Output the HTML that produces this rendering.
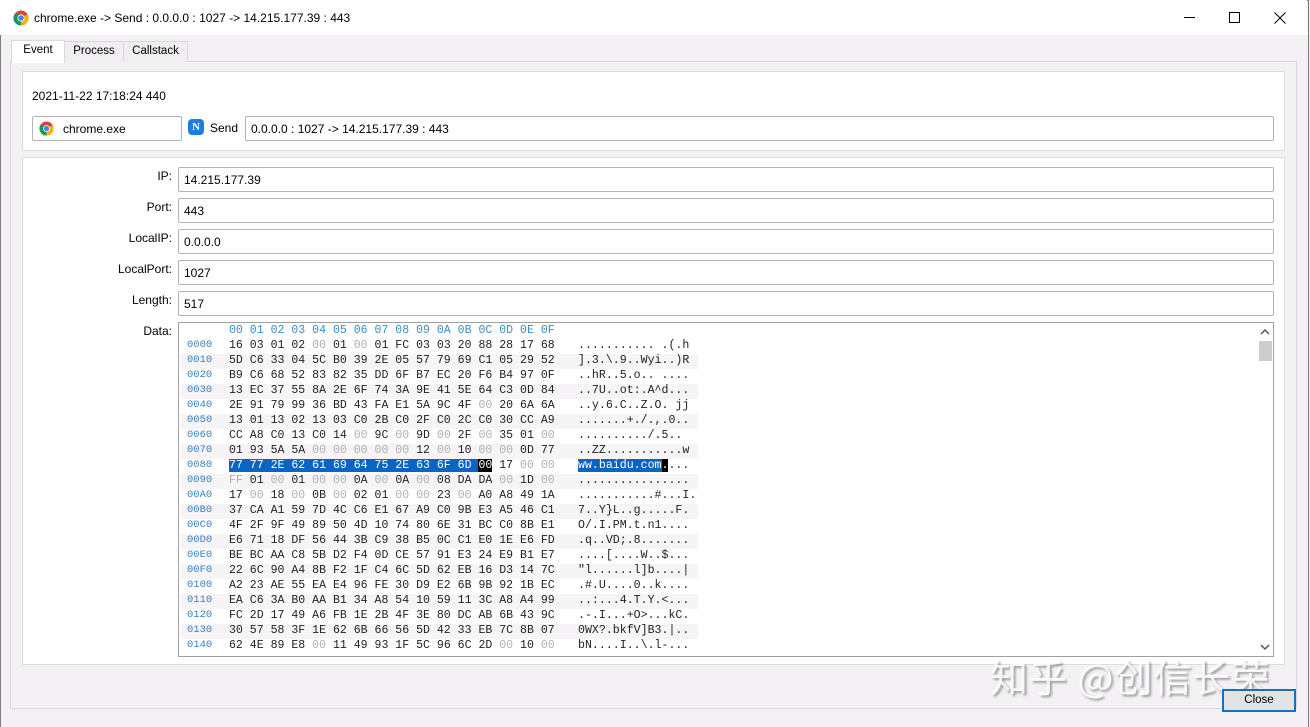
<!DOCTYPE html>
<html><head><meta charset="utf-8"><style>
*{margin:0;padding:0;box-sizing:border-box}
body{width:1310px;height:727px;background:#f3f1f4;font-family:"Liberation Sans","Noto Sans CJK SC",sans-serif;font-size:12px;color:#000;position:relative;overflow:hidden}
.win{position:absolute;left:0;top:0;width:1309px;height:727px;border:1px solid #7a7a7a;border-bottom:none}
.title{position:absolute;left:0;top:0;width:1307px;height:35px;background:#fff}
.abs{position:absolute}
.tab{position:absolute;top:41px;height:21px;border:1px solid #d9d9d9;border-bottom:none;background:#f0eef1;padding:3px 0 0;text-align:center;font-size:11.5px}
.box{position:absolute;border:1px solid #dcdcdc;background:#fff}
.in{position:absolute;border:1px solid #b4b4b4;border-radius:2px;background:#fff;height:25px;padding:5px 0 0 5px;font-size:12px}
.lbl{position:absolute;width:172px;text-align:right;font-size:12px}
.hex{position:absolute;left:180px;width:518px;height:15px;font-family:"Liberation Mono",monospace;white-space:pre}
.hex.alt{background:#f6f4f7}
.hex .o{position:absolute;left:7px;top:0px;font-size:10.5px;color:#3a7fc0}
.hex .b{position:absolute;left:49px;top:0px;font-size:11.55px;color:#222}
.hex .a{position:absolute;left:398px;top:0px;font-size:11.6px;color:#222}
i{font-style:normal;color:#b0b0b0}
.hl{background:#0a64c4;color:#fff}
.hk{background:#000;color:#fff}
</style></head><body>
<div class="win"></div>
<div class="title"></div>
<svg class="abs" style="left:13px;top:10px" width="16" height="16" viewBox="0 0 16 16"><circle cx="8" cy="8" r="7.5" fill="#db4437"/><path d="M8 8 L1.5 11.7 A7.5 7.5 0 0 0 8 15.5 Z" fill="#0f9d58"/><path d="M8 8 L1.5 11.7 A7.5 7.5 0 0 1 1.5 4.3 L8 4.3Z" fill="#0f9d58"/><path d="M8 8 L14.5 4.3 A7.5 7.5 0 0 1 8 15.5 Z" fill="#f4b400"/><circle cx="8" cy="8" r="3.6" fill="#fff"/><circle cx="8" cy="8" r="2.8" fill="#4285f4"/></svg>
<div class="abs" style="left:34px;top:11px;font-size:12px">chrome.exe -&gt; Send : 0.0.0.0 : 1027 -&gt; 14.215.177.39 : 443</div>
<div class="abs" style="left:1184px;top:17px;width:11px;height:1px;background:#000"></div>
<div class="abs" style="left:1229px;top:12px;width:11px;height:11px;border:1px solid #000"></div>
<svg class="abs" style="left:1274px;top:12px" width="12" height="12"><path d="M0.5 0.5L11.5 11.5M11.5 0.5L0.5 11.5" stroke="#000" stroke-width="1"/></svg>

<div class="abs" style="left:10px;top:61px;width:1287px;height:648px;border:1px solid #d9d9d9;background:#f3f1f4"></div>
<div class="tab" style="left:11px;top:40px;width:54px;height:23px;background:#fff;z-index:2">Event</div>
<div class="tab" style="left:64px;width:60px">Process</div>
<div class="tab" style="left:123px;width:65px">Callstack</div>

<div class="box" style="left:22px;top:71px;width:1263px;height:80px"></div>
<div class="abs" style="left:32px;top:89px;font-size:12px">2021-11-22 17:18:24 440</div>
<div class="in" style="left:32px;top:116px;width:150px;height:25px;padding-left:30px">chrome.exe</div>
<svg class="abs" style="left:39px;top:121px" width="15" height="15" viewBox="0 0 16 16"><circle cx="8" cy="8" r="7.5" fill="#db4437"/><path d="M8 8 L1.5 11.7 A7.5 7.5 0 0 0 8 15.5 Z" fill="#0f9d58"/><path d="M8 8 L1.5 11.7 A7.5 7.5 0 0 1 1.5 4.3 L8 4.3Z" fill="#0f9d58"/><path d="M8 8 L14.5 4.3 A7.5 7.5 0 0 1 8 15.5 Z" fill="#f4b400"/><circle cx="8" cy="8" r="3.6" fill="#fff"/><circle cx="8" cy="8" r="2.8" fill="#4285f4"/></svg>
<div class="abs" style="left:188px;top:119px;width:16px;height:16px;background:#1a7fe0;border-radius:4px;color:#fff;font-family:'Liberation Serif',serif;font-weight:bold;font-size:11px;text-align:center;line-height:16px">N</div>
<div class="abs" style="left:210px;top:121px">Send</div>
<div class="in" style="left:245px;top:116px;width:1029px">0.0.0.0 : 1027 -&gt; 14.215.177.39 : 443</div>

<div class="box" style="left:22px;top:157px;width:1263px;height:508px"></div>
<div class="lbl" style="left:0;top:169px">IP:</div><div class="in" style="left:178px;top:167px;width:1096px">14.215.177.39</div>
<div class="lbl" style="left:0;top:200px">Port:</div><div class="in" style="left:178px;top:198px;width:1096px">443</div>
<div class="lbl" style="left:0;top:231px">LocalIP:</div><div class="in" style="left:178px;top:229px;width:1096px">0.0.0.0</div>
<div class="lbl" style="left:0;top:262px">LocalPort:</div><div class="in" style="left:178px;top:260px;width:1096px">1027</div>
<div class="lbl" style="left:0;top:293px">Length:</div><div class="in" style="left:178px;top:291px;width:1096px">517</div>
<div class="lbl" style="left:0;top:324px">Data:</div>
<div class="abs" style="left:178px;top:322px;width:1096px;height:335px;border:1px solid #a0a0a0;background:#fff;overflow:hidden">
<div class="abs" style="left:1078px;top:0;width:17px;height:333px;background:#fff"></div>
<div class="abs" style="left:1080px;top:18px;width:13px;height:20px;background:#cdcdcd"></div>
<svg class="abs" style="left:1081px;top:5px" width="10" height="8"><path d="M1 6L5 2L9 6" stroke="#555" stroke-width="1.5" fill="none"/></svg>
<svg class="abs" style="left:1081px;top:320px" width="10" height="8"><path d="M1 2L5 6L9 2" stroke="#555" stroke-width="1.5" fill="none"/></svg>
</div>
<div style="position:absolute;left:0;top:2px">
<div class="hex" style="top:322px"><span class="b" style="color:#3a8cc8">00 01 02 03 04 05 06 07 08 09 0A 0B 0C 0D 0E 0F</span></div>
<div class="hex" style="top:337px"><span class="o">0000</span><span class="b">16 03 01 02 <i>00</i> 01 <i>00</i> 01 FC 03 03 20 88 28 17 68</span><span class="a">........... .(.h</span></div>
<div class="hex alt" style="top:352px"><span class="o">0010</span><span class="b">5D C6 33 04 5C B0 39 2E 05 57 79 69 C1 05 29 52</span><span class="a">].3.\.9..Wyi..)R</span></div>
<div class="hex" style="top:367px"><span class="o">0020</span><span class="b">B9 C6 68 52 83 82 35 DD 6F B7 EC 20 F6 B4 97 0F</span><span class="a">..hR..5.o.. ....</span></div>
<div class="hex alt" style="top:382px"><span class="o">0030</span><span class="b">13 EC 37 55 8A 2E 6F 74 3A 9E 41 5E 64 C3 0D 84</span><span class="a">..7U..ot:.A^d...</span></div>
<div class="hex" style="top:397px"><span class="o">0040</span><span class="b">2E 91 79 99 36 BD 43 FA E1 5A 9C 4F <i>00</i> 20 6A 6A</span><span class="a">..y.6.C..Z.O. jj</span></div>
<div class="hex alt" style="top:412px"><span class="o">0050</span><span class="b">13 01 13 02 13 03 C0 2B C0 2F C0 2C C0 30 CC A9</span><span class="a">.......+./.,.0..</span></div>
<div class="hex" style="top:427px"><span class="o">0060</span><span class="b">CC A8 C0 13 C0 14 <i>00</i> 9C <i>00</i> 9D <i>00</i> 2F <i>00</i> 35 01 <i>00</i></span><span class="a">........../.5..</span></div>
<div class="hex alt" style="top:442px"><span class="o">0070</span><span class="b">01 93 5A 5A <i>00 00 00 00 00</i> 12 <i>00</i> 10 <i>00 00</i> 0D 77</span><span class="a">..ZZ...........w</span></div>
<div class="hex" style="top:457px"><span class="o">0080</span><span class="b"><span class="hl">77 77 2E 62 61 69 64 75 2E 63 6F 6D </span><span class="hk">00</span> 17 <i>00 00</i></span><span class="a"><span class="hl">ww.baidu.com</span><span class="hk">.</span>...</span></div>
<div class="hex alt" style="top:472px"><span class="o">0090</span><span class="b"><i>FF</i> 01 <i>00</i> 01 <i>00 00</i> 0A <i>00</i> 0A <i>00</i> 08 DA DA <i>00</i> 1D <i>00</i></span><span class="a">................</span></div>
<div class="hex" style="top:487px"><span class="o">00A0</span><span class="b">17 <i>00</i> 18 <i>00</i> 0B <i>00</i> 02 01 <i>00 00</i> 23 <i>00</i> A0 A8 49 1A</span><span class="a">...........#...I.</span></div>
<div class="hex alt" style="top:502px"><span class="o">00B0</span><span class="b">37 CA A1 59 7D 4C C6 E1 67 A9 C0 9B E3 A5 46 C1</span><span class="a">7..Y}L..g.....F.</span></div>
<div class="hex" style="top:517px"><span class="o">00C0</span><span class="b">4F 2F 9F 49 89 50 4D 10 74 80 6E 31 BC C0 8B E1</span><span class="a">O/.I.PM.t.n1....</span></div>
<div class="hex alt" style="top:532px"><span class="o">00D0</span><span class="b">E6 71 18 DF 56 44 3B C9 38 B5 0C C1 E0 1E E6 FD</span><span class="a">.q..VD;.8.......</span></div>
<div class="hex" style="top:547px"><span class="o">00E0</span><span class="b">BE BC AA C8 5B D2 F4 0D CE 57 91 E3 24 E9 B1 E7</span><span class="a">....[....W..$...</span></div>
<div class="hex alt" style="top:562px"><span class="o">00F0</span><span class="b">22 6C 90 A4 8B F2 1F C4 6C 5D 62 EB 16 D3 14 7C</span><span class="a">"l......l]b....|</span></div>
<div class="hex" style="top:577px"><span class="o">0100</span><span class="b">A2 23 AE 55 EA E4 96 FE 30 D9 E2 6B 9B 92 1B EC</span><span class="a">.#.U....0..k....</span></div>
<div class="hex alt" style="top:592px"><span class="o">0110</span><span class="b">EA C6 3A B0 AA B1 34 A8 54 10 59 11 3C A8 A4 99</span><span class="a">..:...4.T.Y.&lt;...</span></div>
<div class="hex" style="top:607px"><span class="o">0120</span><span class="b">FC 2D 17 49 A6 FB 1E 2B 4F 3E 80 DC AB 6B 43 9C</span><span class="a">.-.I...+O&gt;...kC.</span></div>
<div class="hex alt" style="top:622px"><span class="o">0130</span><span class="b">30 57 58 3F 1E 62 6B 66 56 5D 42 33 EB 7C 8B 07</span><span class="a">0WX?.bkfV]B3.|..</span></div>
<div class="hex" style="top:637px"><span class="o">0140</span><span class="b">62 4E 89 E8 <i>00</i> 11 49 93 1F 5C 96 6C 2D <i>00</i> 10 <i>00</i></span><span class="a">bN....I..\.l-...</span></div>
</div>

<div class="abs" style="left:990px;top:648px;font-size:38px;color:rgba(255,255,255,0.85);text-shadow:2px 2px 2px rgba(0,0,0,0.35);font-family:'Noto Sans CJK SC',sans-serif;white-space:nowrap;letter-spacing:1px">知乎 @创信长荣</div>

<div class="abs" style="left:1222px;top:689px;width:74px;height:23px;border:2px solid #1a6fb8;background:#e3e3e3;text-align:center;font-size:11.5px;line-height:19px">Close</div>
</body></html>
